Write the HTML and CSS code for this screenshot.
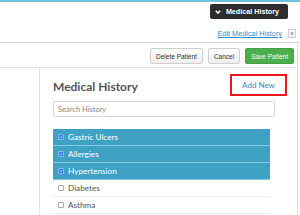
FILE: index.html
```html
<!DOCTYPE html>
<html lang="en">
<head>
    <meta charset="UTF-8">
    <title>Patient | Medical History</title>
    <link rel="stylesheet" href="styles.css">
</head>
<body>
    <header class="top">
        <div class="top-row">
            <button class="btn-dark">
                <svg class="chevron" width="6" height="4" viewBox="0 0 6 4" aria-hidden="true">
                    <polyline points="0.8,0.8 3,3 5.2,0.8" fill="none" stroke="#fff" stroke-width="1.6"/>
                </svg>
                Medical History
            </button>
        </div>
        <div class="edit-row">
            <a href="#" class="edit-link">Edit Medical History</a>
            <span class="close-box">x</span>
        </div>
    </header>

    <div class="page">
        <div class="toolbar">
            <button class="btn">Delete Patient</button>
            <button class="btn">Cancel</button>
            <button class="btn btn-success">Save Patient</button>
        </div>

        <div class="content">
            <aside class="sidebar"></aside>
            <section class="panel">
                <div class="panel-head">
                    <h2>Medical History</h2>
                    <a href="#" class="add-new">Add New</a>
                </div>
                <input class="search" type="text" placeholder="Search History">
                <ul class="history-list">
                    <li class="item checked"><span class="check"></span>Gastric Ulcers</li>
                    <li class="item checked"><span class="check"></span>Allergies</li>
                    <li class="item checked"><span class="check"></span>Hypertension</li>
                    <li class="item"><span class="check"></span>Diabetes</li>
                    <li class="item"><span class="check"></span>Asthma</li>
                </ul>
            </section>
        </div>
    </div>
</body>
</html>
```

FILE: styles.css
```css
* {
    margin: 0;
    padding: 0;
    box-sizing: border-box;
}

body {
    width: 300px;
    font-family: "Liberation Sans", Arial, sans-serif;
    background: #fff;
    color: #555;
    overflow: hidden;
}

/* Top header */
.top {
    border-top: 2px solid #6fc1df;
    border-bottom: 1px solid #dcdcdc;
    padding: 2px 0 4px;
}

.top-row {
    display: flex;
    justify-content: flex-end;
    padding-right: 12px;
}

.btn-dark {
    display: flex;
    align-items: center;
    gap: 5px;
    height: 15px;
    padding: 0 9px 0 5px;
    background: #2d2d2d;
    color: #fff;
    border: none;
    border-radius: 2px;
    font-family: "Liberation Sans", Arial, sans-serif;
    font-weight: bold;
    font-size: 7.2px;
}

.edit-row {
    display: flex;
    justify-content: flex-end;
    align-items: center;
    gap: 6px;
    margin-top: 10px;
    padding-right: 4px;
}

.edit-link {
    color: #2b8fd4;
    font-size: 7.3px;
    text-decoration: underline;
}

.close-box {
    width: 8px;
    height: 9px;
    border: 1px solid #cfcfcf;
    background: #f6f6f6;
    color: #444;
    font-size: 6px;
    line-height: 7px;
    text-align: center;
}

/* Page body */
.page {
    width: 298px;
    border-right: 1px solid #dcdcdc;
    height: 173px;
}

.toolbar {
    display: flex;
    justify-content: flex-end;
    gap: 5px;
    padding: 5px 3px 3px 0;
    border-bottom: 1px solid #e2e2e2;
}

.btn {
    height: 16px;
    padding: 0 5px;
    border: 1px solid #cfcfcf;
    border-radius: 2px;
    background: linear-gradient(#fdfdfd, #eeeeee);
    color: #333;
    font-family: "Liberation Sans", Arial, sans-serif;
    font-size: 6.5px;
}

.btn-success {
    background: #4cae4c;
    border-color: #43a043;
    color: #fff;
}

.content {
    display: flex;
    height: 147px;
}

.sidebar {
    width: 40px;
    border-right: 1px solid #e2e2e2;
}

.panel {
    flex: 1;
    padding: 6px 22px 0 13px;
    font-family: Lato, "Open Sans", sans-serif;
}

.panel-head {
    display: flex;
    justify-content: space-between;
    align-items: center;
    margin-right: -12px;
}

.panel-head h2 {
    font-size: 12px;
    font-weight: bold;
    color: #555;
    margin-top: 3px;
}

.add-new {
    display: block;
    width: 57px;
    height: 22px;
    border: 2px solid #f0141e;
    color: #3a8bc6;
    font-size: 8px;
    line-height: 18px;
    text-align: center;
    text-decoration: none;
}

.search {
    display: block;
    width: 100%;
    height: 16px;
    margin-top: 5px;
    padding-left: 4px;
    border: 1px solid #d6d6d6;
    border-radius: 2px;
    font-family: Lato, "Open Sans", sans-serif;
    font-size: 7.5px;
    color: #555;
}

.search::placeholder {
    color: #888;
}

/* History checklist */
.history-list {
    list-style: none;
    margin-top: 12px;
    margin-right: 5px;
}

.item {
    display: flex;
    align-items: center;
    gap: 4px;
    height: 17px;
    padding-left: 5px;
    border-bottom: 1px solid #ececec;
    font-size: 8.2px;
    color: #555;
}

.item.checked {
    background: #3fa2c4;
    border-bottom-color: #86c8de;
    color: #fff;
}

.check {
    width: 6px;
    height: 6px;
    border: 1px solid #aaa;
    border-radius: 1px;
    background: #fff;
}

.item.checked .check {
    border-color: #8fb9ee;
    background: #2f7fe6 url("data:image/svg+xml;utf8,<svg xmlns='http://www.w3.org/2000/svg' viewBox='0 0 6 6'><polyline points='1.3,3.2 2.5,4.4 4.7,1.6' fill='none' stroke='white' stroke-width='1'/></svg>") center / 100% no-repeat;
}
```
